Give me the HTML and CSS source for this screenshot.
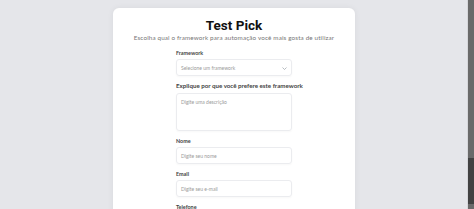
FILE: index.html
```html
<!DOCTYPE html>
<html>
  <head>
    <meta charset="UTF-8" />
    <title>Test Pick</title>
    <link rel="stylesheet" href="styles.css">
  </head>
  <body>
    <div class="card">
      <h1 class="title">Test Pick</h1>
      <p class="subtitle">Escolha qual o framework para automação você mais gosta de utilizar</p>

      <form class="form">
        <label class="field">
          <span class="label">Framework</span>
          <span class="input select">
            Selecione um framework
            <svg class="chevron" width="5" height="3" viewBox="0 0 5 3"><path d="M0.5 0.5 L2.5 2.5 L4.5 0.5" fill="none" stroke="#9aa0a8" stroke-width="0.7"/></svg>
          </span>
        </label>

        <label class="field">
          <span class="label big">Explique por que você prefere este framework</span>
          <span class="input area">Digite uma descrição</span>
        </label>

        <label class="field">
          <span class="label">Nome</span>
          <span class="input">Digite seu nome</span>
        </label>

        <label class="field">
          <span class="label">Email</span>
          <span class="input">Digite seu e-mail</span>
        </label>

        <label class="field">
          <span class="label">Telefone</span>
          <span class="input">Digite seu telefone</span>
        </label>
      </form>
    </div>

    <div class="scrollbar">
      <div class="thumb"></div>
    </div>
  </body>
</html>
```

FILE: styles.css
```css
html, body {
  height: 100%;
  overflow: hidden;
}

body {
  margin: 0;
  background-color: #e5e6ea;
  font-family: Lato, "Open Sans", sans-serif;
  color: #222;
}

/* Style the card */
.card {
  width: 242px;
  margin: 8px 0 0 113px;
  background-color: #fff;
  border-radius: 6px;
  box-shadow: 0 0 6px rgba(0, 0, 0, 0.06);
  padding: 9px 0 40px;
}

.title {
  margin: 0;
  text-align: center;
  font-family: Roboto, sans-serif;
  font-weight: 700;
  font-size: 13.5px;
  line-height: 16px;
  color: #111;
}

.subtitle {
  margin: 1px 0 0;
  text-align: center;
  font-size: 6.3px;
  line-height: 8px;
  letter-spacing: 0.15px;
  color: #777;
}

/* Style the form */
.form {
  width: 116px;
  margin: 8px auto 0;
  display: flex;
  flex-direction: column;
  gap: 7px;
}

.field {
  display: flex;
  flex-direction: column;
  gap: 2px;
}

.label {
  font-size: 5.4px;
  line-height: 7px;
  font-weight: 700;
  color: #444;
}

.label.big {
  font-size: 6.2px;
  white-space: nowrap;
  margin-top: -1px;
  margin-bottom: 2px;
}

.input {
  position: relative;
  height: 17px;
  box-sizing: border-box;
  border: 1px solid #ebecef;
  border-radius: 3px;
  padding: 5px 4px 0;
  font-size: 5px;
  color: #9a9a9a;
  box-shadow: 0 1px 2px rgba(0, 0, 0, 0.03);
}

.input.area {
  height: 38px;
}

.chevron {
  position: absolute;
  right: 4px;
  top: 7px;
}

/* Style the scrollbar */
.scrollbar {
  position: fixed;
  top: 0;
  right: 0;
  width: 6px;
  height: 100%;
  background-color: #6a6a6a;
  border-left: 1px solid #d6d7db;
}

.thumb {
  position: absolute;
  left: 0;
  right: 0;
  top: 158px;
  height: 46px;
  background-color: #424242;
}
```
